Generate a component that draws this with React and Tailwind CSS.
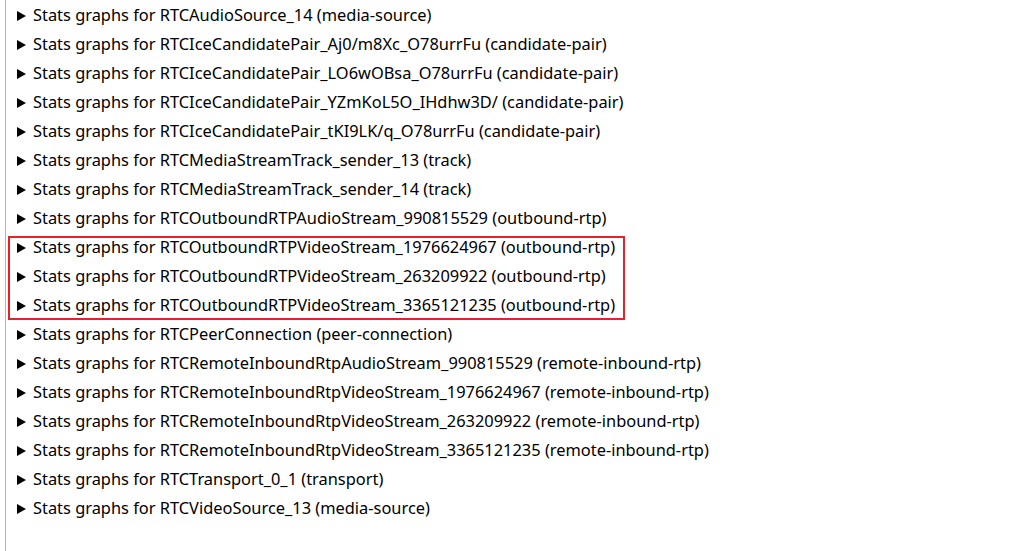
import React from "react";

const rows = [
  "RTCAudioSource_14 (media-source)",
  "RTCIceCandidatePair_Aj0/m8Xc_O78urrFu (candidate-pair)",
  "RTCIceCandidatePair_LO6wOBsa_O78urrFu (candidate-pair)",
  "RTCIceCandidatePair_YZmKoL5O_IHdhw3D/ (candidate-pair)",
  "RTCIceCandidatePair_tKI9LK/q_O78urrFu (candidate-pair)",
  "RTCMediaStreamTrack_sender_13 (track)",
  "RTCMediaStreamTrack_sender_14 (track)",
  "RTCOutboundRTPAudioStream_990815529 (outbound-rtp)",
  "RTCOutboundRTPVideoStream_1976624967 (outbound-rtp)",
  "RTCOutboundRTPVideoStream_263209922 (outbound-rtp)",
  "RTCOutboundRTPVideoStream_3365121235 (outbound-rtp)",
  "RTCPeerConnection (peer-connection)",
  "RTCRemoteInboundRtpAudioStream_990815529 (remote-inbound-rtp)",
  "RTCRemoteInboundRtpVideoStream_1976624967 (remote-inbound-rtp)",
  "RTCRemoteInboundRtpVideoStream_263209922 (remote-inbound-rtp)",
  "RTCRemoteInboundRtpVideoStream_3365121235 (remote-inbound-rtp)",
  "RTCTransport_0_1 (transport)",
  "RTCVideoSource_13 (media-source)",
];

function Tri() {
  return (
    <svg width="9" height="10" viewBox="0 0 9 10" className="shrink-0">
      <path d="M0 0 L9 5 L0 10 Z" fill="#000" />
    </svg>
  );
}

export default function App() {
  return (
    <div className="w-[1009px] h-[551px] bg-white overflow-hidden">
      <div
        className="relative ml-[5px] h-full border-l border-[#6fd6cc] pt-[1px]"
        style={{ fontFamily: '"Noto Sans", "Open Sans", sans-serif' }}
      >
        {rows.map((r) => (
          <div key={r} className="flex items-center h-[29px] pl-[11px] gap-[7px] text-[16.4px] text-black">
            <Tri />
            <span className="whitespace-nowrap">Stats graphs for {r}</span>
          </div>
        ))}
        <div className="absolute left-[2px] top-[236px] w-[617px] h-[84px] border-2 border-[#e8202a] pointer-events-none" />
      </div>
    </div>
  );
}
